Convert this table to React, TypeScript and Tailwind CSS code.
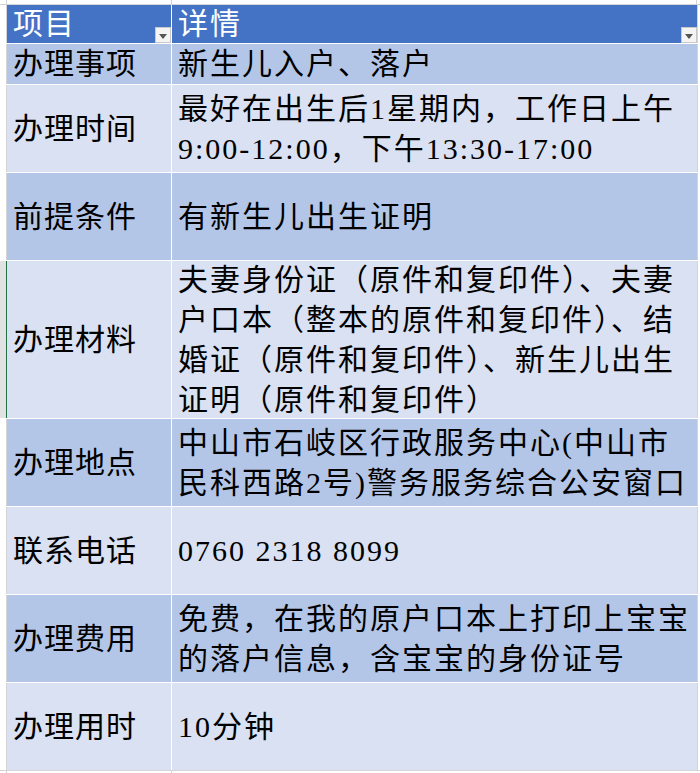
import type { ReactNode } from "react";

type Row = {
  label: string;
  lines: string[];
  height: string;
  dark: boolean;
  selected?: boolean;
};

const ROWS: Row[] = [
  { label: "办理事项", lines: ["新生儿入户、落户"], height: "h-[40px]", dark: true },
  {
    label: "办理时间",
    lines: ["最好在出生后1星期内，工作日上午", "9:00-12:00，下午13:30-17:00"],
    height: "h-[87px]",
    dark: false,
  },
  { label: "前提条件", lines: ["有新生儿出生证明"], height: "h-[87px]", dark: true },
  {
    label: "办理材料",
    lines: [
      "夫妻身份证（原件和复印件）、夫妻",
      "户口本（整本的原件和复印件）、结",
      "婚证（原件和复印件）、新生儿出生",
      "证明（原件和复印件）",
    ],
    height: "h-[157px]",
    dark: false,
    selected: true,
  },
  {
    label: "办理地点",
    lines: ["中山市石岐区行政服务中心(中山市", "民科西路2号)警务服务综合公安窗口"],
    height: "h-[87px]",
    dark: true,
  },
  { label: "联系电话", lines: ["0760 2318 8099"], height: "h-[87px]", dark: false },
  {
    label: "办理费用",
    lines: ["免费，在我的原户口本上打印上宝宝", "的落户信息，含宝宝的身份证号"],
    height: "h-[87px]",
    dark: true,
  },
  { label: "办理用时", lines: ["10分钟"], height: "h-[87px]", dark: false },
];

const FONT = "font-['Liberation_Serif','Noto_Sans_CJK_SC',serif]";

function FilterButton() {
  return (
    <span className="absolute bottom-0 right-0 flex h-[16px] w-[16px] items-center justify-center border border-[#c8c8c8] bg-[#f4f4f4]">
      <svg width="8" height="5" viewBox="0 0 8 5" className="mt-[2px]">
        <path d="M0 0 L8 0 L4 5 Z" fill="#555" />
      </svg>
    </span>
  );
}

function Margin({ selected, children }: { selected?: boolean; children?: ReactNode }) {
  return (
    <div
      className={`relative w-[7px] shrink-0 border-r ${
        selected ? "border-[#217346] bg-[#e2e2e2]" : "border-[#d4d4d4] bg-white"
      }`}
    >
      {children}
    </div>
  );
}

export default function App() {
  return (
    <div className={`h-[773px] w-[700px] overflow-hidden bg-white text-black ${FONT}`}>
      {/* gridline strip above the table */}
      <div className="flex h-[5px] border-b border-[#d4d4d4]">
        <div className="w-[7px] border-r border-[#d4d4d4]" />
        <div className="w-[165px] border-r border-[#d4d4d4]" />
        <div className="w-[525px] border-r border-[#d4d4d4]" />
      </div>

      <div className="flex flex-col gap-px">
        <div className="flex h-[38px]">
          <Margin />
          <div className="flex gap-px">
            <div className="relative flex w-[164px] items-center bg-[#4472c4] pl-[6px] text-[30px] leading-[38px] tracking-[1px] text-white">
              项目
              <FilterButton />
            </div>
            <div className="relative flex w-[525px] items-center bg-[#4472c4] pl-[6px] text-[30px] leading-[38px] tracking-[2px] text-white">
              详情
              <FilterButton />
            </div>
          </div>
          <div className="w-[3px] border-l border-[#d4d4d4]" />
        </div>

        {ROWS.map((r) => (
          <div key={r.label} className={`flex ${r.height}`}>
            <Margin selected={r.selected} />
            <div className="flex gap-px">
              <div
                className={`flex w-[164px] items-center pl-[6px] text-[30px] leading-[40px] tracking-[1px] ${
                  r.dark ? "bg-[#b4c6e7]" : "bg-[#d9e1f2]"
                }`}
              >
                {r.label}
              </div>
              <div
                className={`flex w-[525px] flex-col justify-center pl-[6px] text-[30px] leading-[40px] tracking-[2px] ${
                  r.dark ? "bg-[#b4c6e7]" : "bg-[#d9e1f2]"
                }`}
              >
                {r.lines.map((l) => (
                  <span key={l} className="whitespace-pre">
                    {l}
                  </span>
                ))}
              </div>
            </div>
            <div className="w-[3px] border-l border-[#d4d4d4]" />
          </div>
        ))}
      </div>
      <div className="flex h-[3px] border-t border-[#d4d4d4]">
        <div className="w-[7px] border-r border-[#d4d4d4]" />
        <div className="w-[165px] border-r border-[#d4d4d4]" />
      </div>
    </div>
  );
}
